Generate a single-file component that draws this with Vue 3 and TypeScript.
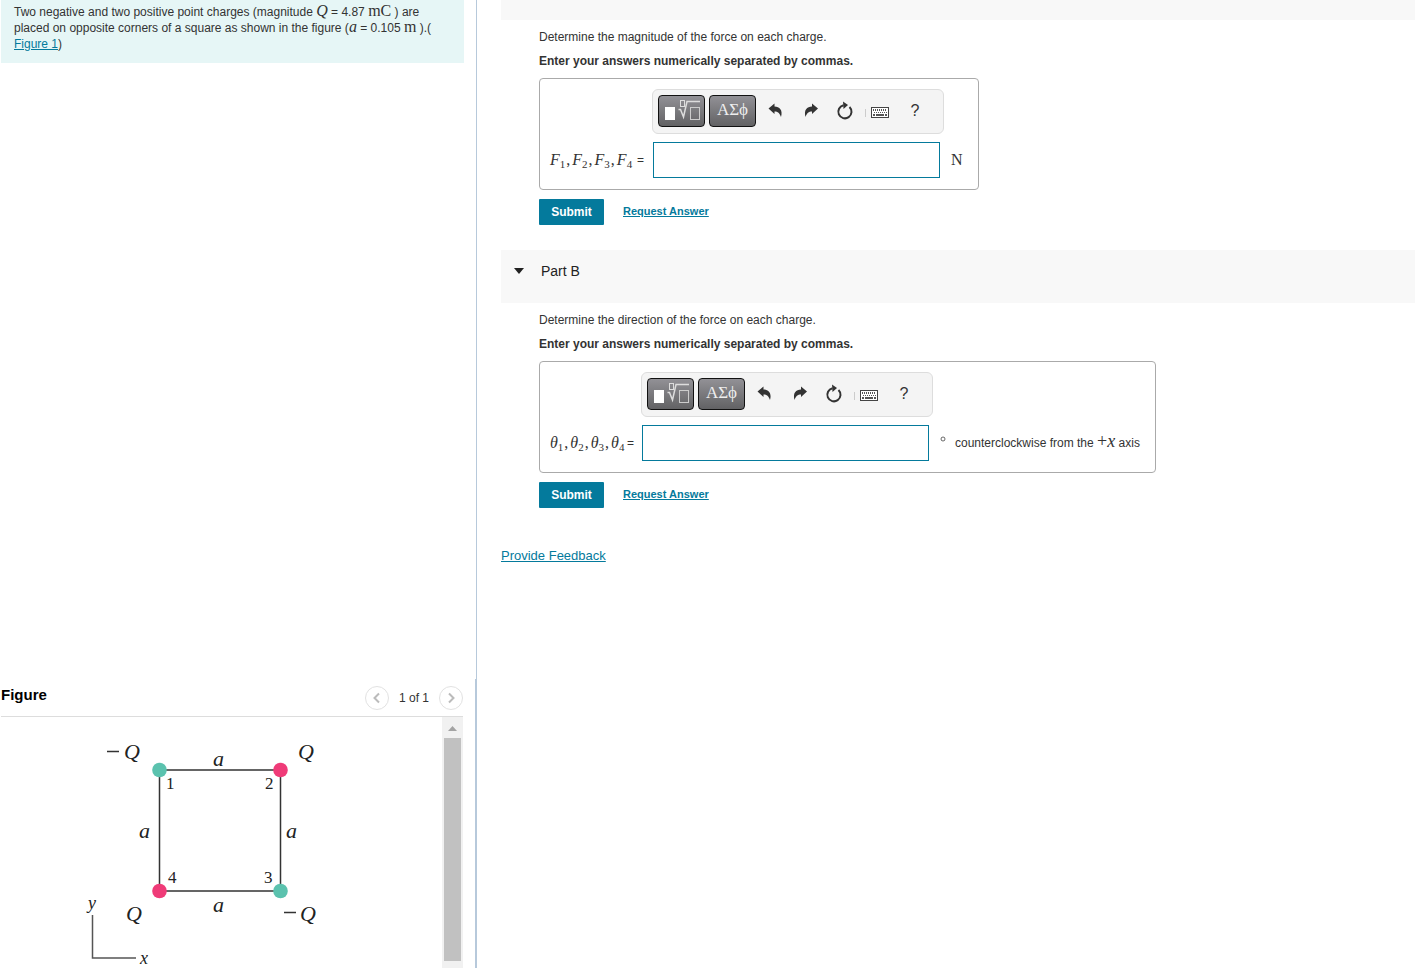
<script setup lang="ts">
import { ref } from 'vue'

interface Part {
  id: string
  title: string
  prompt: string
  symbol: string
  unit: string
}

const parts: Part[] = [
  { id: 'a', title: '', prompt: 'Determine the magnitude of the force on each charge.', symbol: 'F', unit: 'N' },
  { id: 'b', title: 'Part B', prompt: 'Determine the direction of the force on each charge.', symbol: 'θ', unit: '°' },
]
const answers = ref<Record<string, string>>({ a: '', b: '' })
const indices = [1, 2, 3, 4]
const keyColumns = [13, 15, 17, 19, 21, 23, 25]
</script>

<template>
  <div class="page">
    <aside class="left">
      <p class="statement">
        Two negative and two positive point charges (magnitude <i class="math">Q</i> = 4.87 <span class="math">mC</span> ) are
        placed on opposite corners of a square as shown in the figure (<i class="math">a</i> = 0.105 <span class="math">m</span> ).(
        <a href="#figure">Figure 1</a>)
      </p>
      <section id="figure" class="figure">
        <header class="figure-head">
          <h2>Figure</h2>
          <nav class="pager" aria-label="Figures">
            <button type="button" aria-label="Previous figure">
              <svg width="10" height="12" viewBox="0 0 10 12"><path d="M7 1.5L2.5 6L7 10.5" /></svg>
            </button>
            <span>1 of 1</span>
            <button type="button" aria-label="Next figure">
              <svg width="10" height="12" viewBox="0 0 10 12"><path d="M3 1.5L7.500 6L3 10.5" /></svg>
            </button>
          </nav>
        </header>
        <div class="figure-body">
          <svg class="diagram" width="360" height="251" viewBox="0 0 360 251" role="img" aria-label="Four charges on the corners of a square">
            <rect x="158.500" y="53" width="121" height="121" class="edge" />
            <path d="M91.500 198V241H135" class="axis" />
            <circle cx="158.500" cy="53" r="7.300" class="negative" />
            <circle cx="279.500" cy="53" r="7.300" class="positive" />
            <circle cx="279.500" cy="174" r="7.300" class="negative" />
            <circle cx="158.500" cy="174" r="7.300" class="positive" />
            <path d="M106 34.500H118M283 195.500H295" class="minus" />
            <g class="charge">
              <text x="123" y="42">Q</text>
              <text x="297" y="42">Q</text>
              <text x="125" y="204">Q</text>
              <text x="299" y="204">Q</text>
            </g>
            <g class="side">
              <text x="212" y="49">a</text>
              <text x="138" y="121">a</text>
              <text x="285" y="121">a</text>
              <text x="212" y="195">a</text>
            </g>
            <g class="corner">
              <text x="165" y="72">1</text>
              <text x="264" y="72">2</text>
              <text x="263" y="166">3</text>
              <text x="167" y="166">4</text>
            </g>
            <g class="axis-name">
              <text x="87" y="192">y</text>
              <text x="139" y="247">x</text>
            </g>
          </svg>
          <div class="scrollbar" aria-hidden="true">
            <svg width="21" height="21" viewBox="0 0 21 21"><path d="M6 14L10.500 9L15 14Z" fill="#a3a3a3" /></svg>
            <div class="thumb"></div>
          </div>
        </div>
      </section>
    </aside>

    <main class="right">
      <section v-for="part in parts" :key="part.id" class="part">
        <header class="part-head" :class="{ short: !part.title }">
          <template v-if="part.title">
            <svg width="10" height="6" viewBox="0 0 10 6"><path d="M0 0H10L5 6Z" fill="#222" /></svg>
            <h2>{{ part.title }}</h2>
          </template>
        </header>
        <div class="part-body">
          <p>{{ part.prompt }}</p>
          <p class="instruction">Enter your answers numerically separated by commas.</p>
          <div class="answer">
            <div class="toolbar" role="toolbar" aria-label="Equation tools">
              <button type="button" class="palette" aria-label="Templates">
                <svg width="45" height="30" viewBox="1 1 45 30" fill="none" stroke="#ddd">
                  <rect x="7" y="12" width="10" height="13" fill="#fff" stroke="none" />
                  <rect x="22.500" y="5.500" width="4" height="6" />
                  <path d="M20.500 14.500H22.500L25.500 22L29 6.500H42" stroke-width="1.500" />
                  <rect x="32.500" y="12.500" width="9" height="12" stroke="#ccc" />
                </svg>
              </button>
              <button type="button" class="palette greek">ΑΣϕ</button>
              <button type="button" class="tool" aria-label="Undo">
                <svg width="36" height="32" viewBox="0 0 36 32"><path d="M11.500 13.500L17.500 8.500V11.500C22.500 11.500 26 15 24 22C22.500 18 21 16.500 17.500 16.500V19Z" fill="#333" /></svg>
              </button>
              <button type="button" class="tool" aria-label="Redo">
                <svg width="36" height="32" viewBox="0 0 36 32"><path d="M25 13.500L19 8.500V11.500C14 11.500 10.500 15 12.500 22C14 18 15.500 16.500 19 16.500V19Z" fill="#333" /></svg>
              </button>
              <button type="button" class="tool" aria-label="Reset">
                <svg width="32" height="32" viewBox="0 0 32 32">
                  <path d="M20.500 12A6.600 6.600 0 1 1 14.500 10.300" fill="none" stroke="#333" stroke-width="2" />
                  <path d="M14 6.500L19 10L14.500 14Z" fill="#333" />
                </svg>
              </button>
              <button type="button" class="tool" aria-label="Keyboard shortcuts">
                <svg width="36" height="32" viewBox="0 0 36 32">
                  <path d="M4.500 14V22" stroke="#ccc" />
                  <rect x="10.500" y="12.500" width="17" height="10" fill="#fff" stroke="#444" />
                  <g fill="#555">
                    <rect v-for="x in keyColumns" :key="x" :x="x - 1" y="14" width="1" height="2" />
                    <rect v-for="x in keyColumns" :key="x + 40" :x="x" y="17" width="1" height="1" />
                    <rect x="12" y="19" width="2" height="2" />
                    <rect x="15" y="19" width="8" height="2" />
                    <rect x="24" y="19" width="2" height="2" />
                  </g>
                </svg>
              </button>
              <button type="button" class="tool help" aria-label="Help">?</button>
            </div>
            <div class="entry">
              <label :for="'answer-' + part.id" :class="{ theta: part.symbol === 'θ' }">
                <span class="vars"><template v-for="n in indices" :key="n"><i>{{ part.symbol }}</i><sub>{{ n }}</sub><span v-if="n < 4" class="comma">,</span></template></span>
                <span class="equals">=</span>
              </label>
              <input :id="'answer-' + part.id" v-model="answers[part.id]" type="text" />
              <span v-if="part.unit === 'N'" class="math newton">N</span>
              <template v-else>
                <svg class="degree" width="6" height="16" viewBox="0 0 6 16" role="img" aria-label="degrees"><circle cx="3" cy="4" r="2" fill="none" stroke="#444" stroke-width="0.800" /></svg>
                <span>counterclockwise from the <span class="math axis-unit">+<i>x</i></span> axis</span>
              </template>
            </div>
          </div>
          <div class="actions">
            <button type="button" class="submit">Submit</button>
            <a href="#request">Request Answer</a>
          </div>
        </div>
      </section>
      <a class="feedback" href="#feedback">Provide Feedback</a>
    </main>
  </div>
</template>

<style>
body {
  margin: 0;
  background: #fff;
}
</style>

<style scoped>
.page {
  display: grid;
  grid-template-columns: minmax(0, 477fr) minmax(0, 938fr);
  min-height: 100vh;
  font: 12px/16px "Liberation Sans", Arial, sans-serif;
  color: #333;
}
.page *,
.page {
  box-sizing: border-box;
}
a {
  color: #047a9c;
}
p,
h2 {
  margin: 0;
}
button {
  padding: 0;
  border: 0;
  background: none;
  color: inherit;
  font: inherit;
  cursor: pointer;
}
svg {
  display: block;
}
.left {
  display: flex;
  flex-direction: column;
  justify-content: space-between;
  padding-left: 1px;
  border-right: 1px solid #b7c9db;
}
.statement {
  margin-right: 12px;
  padding: 4px 20px 11px 13px;
  background: #e6f6f6;
}
.math {
  font-family: "Liberation Serif", "Times New Roman", serif;
  font-size: 16px;
  line-height: 12px;
}
.figure {
  padding-right: 12px;
  border-right: 1px solid #b7c9db;
}
.figure-head {
  display: flex;
  justify-content: space-between;
  height: 38px;
  border-bottom: 1px solid #ddd;
}
.figure-head h2 {
  padding-top: 8px;
  color: #000;
  font-size: 15px;
  line-height: 16px;
}
.pager {
  display: flex;
  align-items: center;
  gap: 10px;
}
.pager button {
  display: grid;
  place-items: center;
  width: 24px;
  height: 24px;
  border: 1px solid #e2e2e2;
  border-radius: 50%;
}
.pager path {
  fill: none;
  stroke: #bbb;
  stroke-width: 2;
}
.figure-body {
  display: flex;
  justify-content: space-between;
}
.scrollbar {
  display: flex;
  flex-direction: column;
  padding-bottom: 7px;
  background: #f1f1f1;
}
.thumb {
  flex: 1;
  margin: 0 2px;
  background: #c1c1c1;
}
.diagram {
  font-family: "Liberation Serif", "Times New Roman", serif;
  fill: #222;
}
.edge,
.axis,
.minus {
  fill: none;
  stroke: #333;
  stroke-width: 1.5;
}
.axis {
  stroke: #555;
}
.negative {
  fill: #5bc2ae;
}
.positive {
  fill: #ef3b78;
}
.charge {
  font-size: 22px;
  font-style: italic;
}
.side {
  font-size: 22px;
  font-style: italic;
}
.corner {
  font-size: 17px;
}
.axis-name {
  font-size: 18px;
  font-style: italic;
}
.right {
  padding-left: 24px;
}
.part-head {
  display: flex;
  align-items: center;
  gap: 17px;
  height: 53px;
  padding: 0 13px 11px;
  background: #f8f8f8;
}
.part-head.short {
  height: 20px;
}
.part-head h2 {
  font-size: 14px;
  font-weight: 400;
  color: #222;
}
.part-body {
  padding: 9px 0 25px 38px;
}
.instruction {
  margin-top: 8px;
  font-weight: 700;
}
.answer {
  width: fit-content;
  margin-top: 9px;
  padding: 10px 15px 11px 10px;
  border: 1px solid #aaa;
  border-radius: 4px;
  display: grid;
  grid-template-columns: auto;
  gap: 8px;
}
.toolbar {
  display: flex;
  width: 292px;
  height: 45px;
  margin-left: 102px;
  padding: 5px;
  border: 1px solid #ddd;
  border-radius: 6px;
  background: #f4f4f4;
}
.part + .part .toolbar {
  margin-left: 91px;
}
.palette {
  display: grid;
  place-items: center;
  width: 47px;
  height: 32px;
  margin-right: 4px;
  border: 1px solid #111;
  border-radius: 4px;
  background: linear-gradient(#929196, #626264);
  color: #eee;
}
.greek {
  margin-right: 1px;
  padding-bottom: 3px;
  font-family: "Liberation Serif", "Times New Roman", serif;
  font-size: 17px;
}
.tool {
  height: 32px;
}
.help {
  width: 36px;
  font-size: 16px;
}
.entry {
  display: flex;
  align-items: center;
}
label {
  display: flex;
  justify-content: space-between;
  align-items: center;
  width: 103px;
  padding-right: 9px;
}
label.theta {
  width: 92px;
  padding-right: 8px;
}
.vars {
  font-family: "Liberation Serif", "Times New Roman", serif;
  font-size: 16px;
}
.vars sub {
  font-size: 11px;
  line-height: 8px;
  vertical-align: -3px;
}
.comma {
  margin: 0 2px 0 1px;
}
input {
  width: 287px;
  height: 36px;
  padding: 0 8px;
  border: 1px solid #047a9c;
  background: #fff;
  font: inherit;
  outline: 0;
}
.newton {
  margin-left: 11px;
}
.degree {
  margin: 0 9px 0 11px;
}
.axis-unit {
  font-size: 18px;
}
.actions {
  display: flex;
  align-items: center;
  gap: 19px;
  margin-top: 9px;
}
.actions a {
  padding-bottom: 2px;
  font-size: 11px;
  font-weight: 700;
}
.submit {
  width: 65px;
  height: 26px;
  border-radius: 1px;
  background: #047a9c;
  color: #fff;
  font-size: 12px;
  font-weight: 700;
}
.feedback {
  display: inline-block;
  margin-top: 15px;
  font-size: 13px;
}
</style>
